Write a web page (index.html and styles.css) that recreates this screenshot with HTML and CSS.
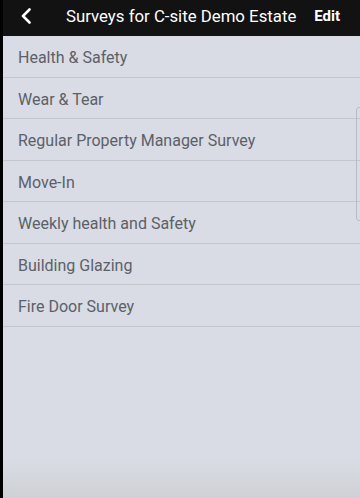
FILE: index.html
```html
<!DOCTYPE html>
<html>
<head>
<meta charset="utf-8">
<link rel="stylesheet" href="styles.css">
</head>
<body>
<div class="screen">
  <div class="edge"></div>
  <div class="main">
    <header class="bar">
      <span class="back"><svg width="12" height="16" viewBox="0 0 12 16"><path d="M9.5 1.5 L3 8 L9.5 14.5" fill="none" stroke="#fff" stroke-width="2.6" stroke-linecap="round" stroke-linejoin="round"/></svg></span>
      <span class="title">Surveys for C-site Demo Estate</span>
      <span class="edit">Edit</span>
    </header>
    <ul class="list">
      <li>Health &amp; Safety</li>
      <li>Wear &amp; Tear</li>
      <li>Regular Property Manager Survey</li>
      <li>Move-In</li>
      <li>Weekly health and Safety</li>
      <li>Building Glazing</li>
      <li>Fire Door Survey</li>
    </ul>
    <div class="scroll"></div>
    <div class="fade"></div>
  </div>
</div>
</body>
</html>
```
FILE: styles.css
```css
html, body { margin: 0; padding: 0; }
body { width: 360px; height: 498px; overflow: hidden; font-family: Roboto, "Liberation Sans", sans-serif; background: #d9dce4; }
.screen { display: flex; height: 498px; }
.edge { width: 3px; background: #000; flex: none; }
.main { flex: 1; position: relative; background: #d9dce4; display: flex; flex-direction: column; }
.bar { height: 36px; background: #121212; display: flex; align-items: center; color: #fff; flex: none; }
.back { width: 19px; padding-left: 17px; display: flex; align-items: center; margin-top: -5px; }
.title { font-size: 16.8px; margin-left: 27px; flex: 1; white-space: nowrap; margin-top: -5px; }
.edit { font-size: 15px; font-weight: 700; margin-right: 20px; margin-top: -5px; }
.list { list-style: none; margin: 0; padding: 0; }
.list li { height: 40.5px; line-height: 44px; border-bottom: 1.2px solid #c3c6cd; padding-left: 15px; font-size: 16px; color: #5b6169; }
.scroll { position: absolute; right: -3px; top: 107px; width: 5px; height: 112px; border: 1px solid #b9bcc3; border-radius: 3px; }
.fade { position: absolute; left: 0; right: 0; bottom: 0; height: 40px; background: linear-gradient(#d9dce4, #cfd1d6); }
```
